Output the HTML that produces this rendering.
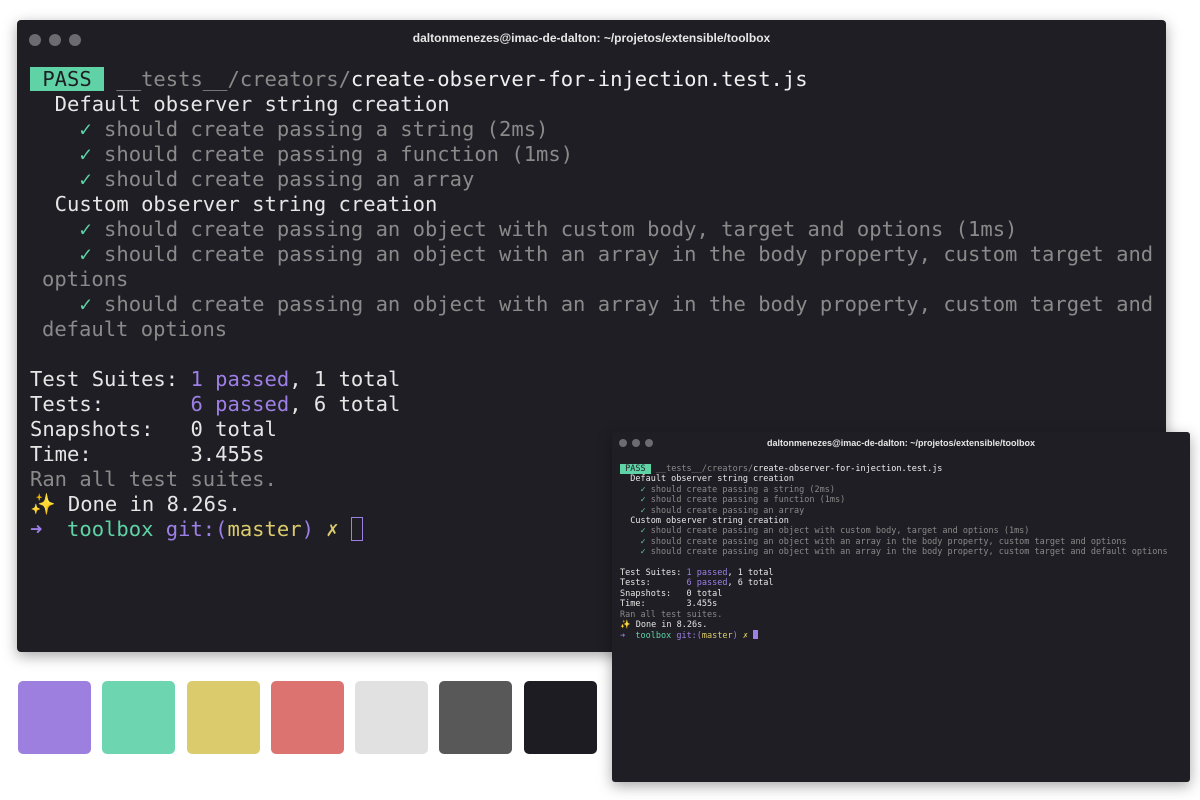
<!DOCTYPE html>
<html><head><meta charset="utf-8"><style>
body{margin:0;width:1200px;height:800px;background:#fff;position:relative;overflow:hidden;font-family:"DejaVu Sans Mono","Liberation Mono",monospace}
.win{position:absolute;background:#1e1e24;border-radius:4px;box-shadow:0 4px 14px rgba(0,0,0,.35)}
.dots{position:absolute;display:flex}
.dots i{display:block;border-radius:50%;background:#6b6b70}
.title{position:absolute;left:0;right:0;text-align:center;color:#e6e6e6;font-family:"Liberation Sans",sans-serif;font-weight:bold}
.l{position:absolute;white-space:pre;color:#e6e6e6}
.g{color:#8a8a8a}.gr{color:#5fd3a5}.p{color:#9d7fe6}.y{color:#dccb6c}.w{color:#f0f0f0}
.pass{background:#5fd3a5;color:#1e1e24}
.sw{position:absolute;top:681px;width:73px;height:73px;border-radius:5px}
</style></head><body>
<div class="win" style="left:17px;top:20px;width:1149px;height:632px">
 <div class="dots" style="left:12px;top:14px;gap:8px"><i style="width:12px;height:12px"></i><i style="width:12px;height:12px"></i><i style="width:12px;height:12px"></i></div>
 <div class="title" style="top:11px;font-size:12px">daltonmenezes@imac-de-dalton: ~/projetos/extensible/toolbox</div>
 <div style="position:absolute;left:13px;top:47px;font-size:20.5px;line-height:25px">
<div class="l" style="top:0"><span class="pass"> PASS </span> <span class="g">__tests__/creators/</span><span class="w">create-observer-for-injection.test.js</span></div>
<div class="l" style="top:25px">  Default observer string creation</div>
<div class="l g" style="top:50px">    <span class="gr">✓</span> should create passing a string (2ms)</div>
<div class="l g" style="top:75px">    <span class="gr">✓</span> should create passing a function (1ms)</div>
<div class="l g" style="top:100px">    <span class="gr">✓</span> should create passing an array</div>
<div class="l" style="top:125px">  Custom observer string creation</div>
<div class="l g" style="top:150px">    <span class="gr">✓</span> should create passing an object with custom body, target and options (1ms)</div>
<div class="l g" style="top:175px">    <span class="gr">✓</span> should create passing an object with an array in the body property, custom target and</div>
<div class="l g" style="top:200px;left:12px">options</div>
<div class="l g" style="top:225px">    <span class="gr">✓</span> should create passing an object with an array in the body property, custom target and</div>
<div class="l g" style="top:250px;left:12px">default options</div>
<div class="l" style="top:300px">Test Suites: <span class="p">1 passed</span>, 1 total</div>
<div class="l" style="top:325px">Tests:       <span class="p">6 passed</span>, 6 total</div>
<div class="l" style="top:350px">Snapshots:   0 total</div>
<div class="l" style="top:375px">Time:        3.455s</div>
<div class="l g" style="top:400px">Ran all test suites.</div>
<div class="l" style="top:425px"><span class="y">✨</span> Done in 8.26s.</div>
<div class="l" style="top:450px"><span class="p">➜</span>  <span class="gr">toolbox</span> <span class="p">git:(</span><span class="y">master</span><span class="p">)</span> <span class="y">✗</span> <span style="display:inline-block;width:10px;height:22px;border:1.5px solid #9d7fe6;vertical-align:-5px"></span></div>
 </div>
</div>
<div class="sw" style="left:18px;background:#9d7fe0"></div>
<div class="sw" style="left:102px;background:#6dd6b0"></div>
<div class="sw" style="left:187px;background:#dccb6c"></div>
<div class="sw" style="left:271px;background:#dc7370"></div>
<div class="sw" style="left:355px;background:#e0e1e0"></div>
<div class="sw" style="left:439px;background:#585858"></div>
<div class="sw" style="left:524px;background:#1c1c22"></div>
<div class="win" style="left:612px;top:432px;width:578px;height:350px;border-radius:3px">
 <div class="dots" style="left:7px;top:7px;gap:5px"><i style="width:8px;height:8px"></i><i style="width:8px;height:8px"></i><i style="width:8px;height:8px"></i></div>
 <div class="title" style="top:6px;font-size:9px">daltonmenezes@imac-de-dalton: ~/projetos/extensible/toolbox</div>
 <div style="position:absolute;left:8px;top:32px;font-size:8.5px;line-height:10.4px">
<div class="l" style="top:0"><span class="pass"> PASS </span> <span class="g">__tests__/creators/</span><span class="w">create-observer-for-injection.test.js</span></div>
<div class="l" style="top:10.4px">  Default observer string creation</div>
<div class="l g" style="top:20.8px">    <span class="gr">✓</span> should create passing a string (2ms)</div>
<div class="l g" style="top:31.2px">    <span class="gr">✓</span> should create passing a function (1ms)</div>
<div class="l g" style="top:41.6px">    <span class="gr">✓</span> should create passing an array</div>
<div class="l" style="top:52px">  Custom observer string creation</div>
<div class="l g" style="top:62.4px">    <span class="gr">✓</span> should create passing an object with custom body, target and options (1ms)</div>
<div class="l g" style="top:72.8px">    <span class="gr">✓</span> should create passing an object with an array in the body property, custom target and options</div>
<div class="l g" style="top:83.2px">    <span class="gr">✓</span> should create passing an object with an array in the body property, custom target and default options</div>
<div class="l" style="top:104px">Test Suites: <span class="p">1 passed</span>, 1 total</div>
<div class="l" style="top:114.4px">Tests:       <span class="p">6 passed</span>, 6 total</div>
<div class="l" style="top:124.8px">Snapshots:   0 total</div>
<div class="l" style="top:135.2px">Time:        3.455s</div>
<div class="l g" style="top:145.6px">Ran all test suites.</div>
<div class="l" style="top:156px"><span class="y">✨</span> Done in 8.26s.</div>
<div class="l" style="top:166.4px"><span class="p">➜</span>  <span class="gr">toolbox</span> <span class="p">git:(</span><span class="y">master</span><span class="p">)</span> <span class="y">✗</span> <span style="display:inline-block;width:5px;height:9px;background:#9d7fe6;vertical-align:-1px"></span></div>
 </div>
</div>
</body></html>
